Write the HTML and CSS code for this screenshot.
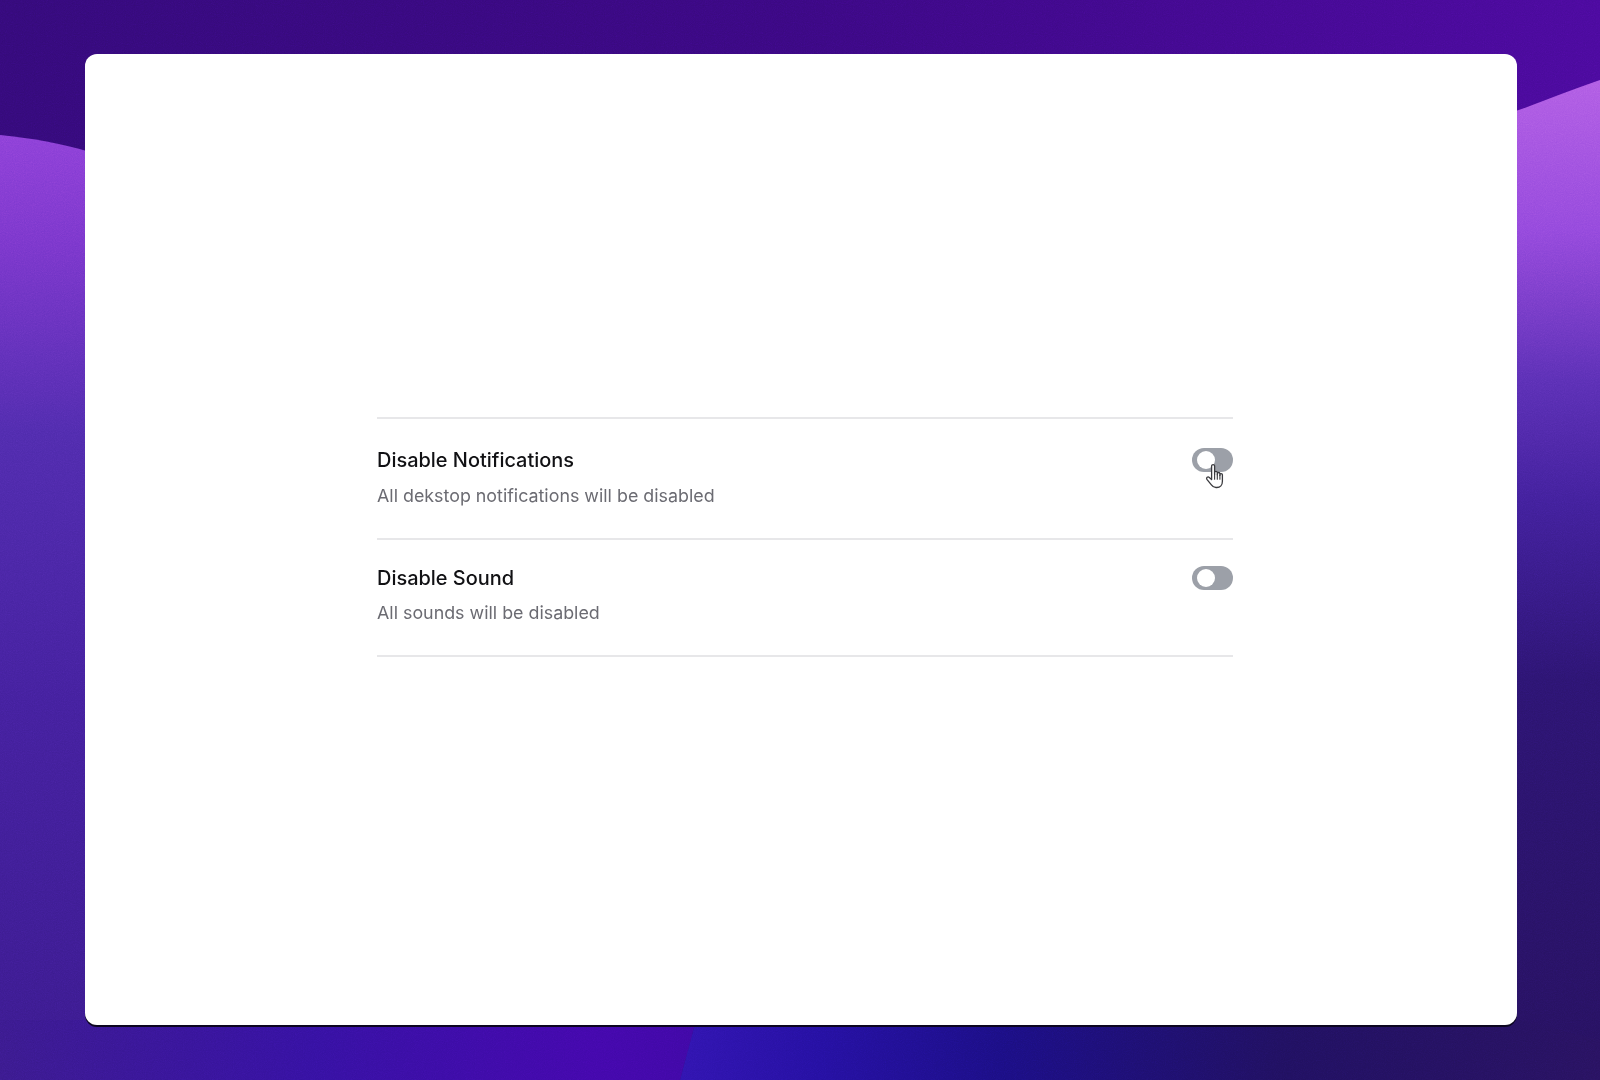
FILE: index.html
```html
<!DOCTYPE html>
<html lang="en">
<head>
    <meta charset="UTF-8">
    <meta name="viewport" content="width=device-width, initial-scale=1.0">
    <title>Notification settings</title>
    <link rel="stylesheet" href="styles.css">
</head>
<body>
    <svg class="wallpaper" viewBox="0 0 1600 1080" preserveAspectRatio="none" aria-hidden="true">
        <defs>
            <linearGradient id="backTop" x1="0" y1="0" x2="1" y2="0">
                <stop offset="0" stop-color="#340a78"/>
                <stop offset="0.5" stop-color="#3a0880"/>
                <stop offset="1" stop-color="#4a0a9c"/>
            </linearGradient>
            <linearGradient id="leftWave" x1="0" y1="130" x2="0" y2="1080" gradientUnits="userSpaceOnUse">
                <stop offset="0" stop-color="#8c40d8"/>
                <stop offset="0.12" stop-color="#7836cb"/>
                <stop offset="0.32" stop-color="#4f2bac"/>
                <stop offset="0.6" stop-color="#43209c"/>
                <stop offset="1" stop-color="#3a1a8c"/>
            </linearGradient>
            <linearGradient id="rightWave" x1="0" y1="80" x2="0" y2="1080" gradientUnits="userSpaceOnUse">
                <stop offset="0" stop-color="#b05ce4"/>
                <stop offset="0.15" stop-color="#9248dc"/>
                <stop offset="0.3" stop-color="#5a2fb4"/>
                <stop offset="0.42" stop-color="#41209a"/>
                <stop offset="0.6" stop-color="#2c1470"/>
                <stop offset="1" stop-color="#26115e"/>
            </linearGradient>
            <linearGradient id="floorLeft" x1="0" y1="0" x2="1" y2="0">
                <stop offset="0" stop-color="#3a1a8c"/>
                <stop offset="0.45" stop-color="#3511a0"/>
                <stop offset="0.85" stop-color="#4208aa"/>
                <stop offset="1" stop-color="#3f08a4"/>
            </linearGradient>
            <linearGradient id="floorRight" x1="680" y1="0" x2="1600" y2="0" gradientUnits="userSpaceOnUse">
                <stop offset="0" stop-color="#3014ae"/>
                <stop offset="0.15" stop-color="#2510a0"/>
                <stop offset="0.35" stop-color="#1b0e82"/>
                <stop offset="0.65" stop-color="#20105f"/>
                <stop offset="1" stop-color="#28125f"/>
            </linearGradient>
            <filter id="grain">
                <feTurbulence type="fractalNoise" baseFrequency="0.9" numOctaves="2" stitchTiles="stitch"/>
                <feColorMatrix type="saturate" values="0"/>
            </filter>
        </defs>
        <rect width="1600" height="1080" fill="url(#backTop)"/>
        <path d="M0 135 C30 138 60 143 90 152 L90 1080 L0 1080 Z" fill="url(#leftWave)"/>
        <path d="M1510 113 C1540 103 1570 90 1600 80 L1600 1080 L1510 1080 Z" fill="url(#rightWave)"/>
        <path d="M80 1020 L696 1020 L680 1080 L0 1080 L0 1020 Z" fill="url(#floorLeft)"/>
        <path d="M696 1020 L1520 1020 L1600 1040 L1600 1080 L680 1080 Z" fill="url(#floorRight)"/>
        <rect class="grain" width="1600" height="1080" filter="url(#grain)"/>
    </svg>

    <main class="card">
        <section class="settings">
            <div class="setting">
                <div class="setting-text">
                    <h2>Disable Notifications</h2>
                    <p>All dekstop notifications will be disabled</p>
                </div>
                <div class="toggle">
                    <span class="knob"></span>
                    <svg class="pointer" viewBox="0 0 20 26" aria-hidden="true">
                        <path d="M6.6 15.6V3.1c0-2 3-2 3 0v8.2V9.6c0-1.7 2.7-1.7 2.7 0v2.2-1.1c0-1.6 2.6-1.6 2.6 0v1.7-.7c0-1.5 2.5-1.5 2.5 0v6.6c0 3.6-2.2 6.2-5.6 6.2H11c-2.400 0-3.500-1-4.600-2.600L1.900 16.400c-1.100-1.700 1-3.300 2.400-2l2.300 2.200z" fill="#fff" stroke="#3a3a3e" stroke-width="1.300" stroke-linejoin="round"/>
                        <path d="M9.600 11.300v5M12.300 11.800v4.500M14.900 12.400v3.900" fill="none" stroke="#3a3a3e" stroke-width="1.100" stroke-linecap="round"/>
                    </svg>
                </div>
            </div>
            <div class="setting">
                <div class="setting-text">
                    <h2>Disable Sound</h2>
                    <p>All sounds will be disabled</p>
                </div>
                <div class="toggle">
                    <span class="knob"></span>
                </div>
            </div>
        </section>
    </main>
</body>
</html>
```

FILE: styles.css
```css
* {
    box-sizing: border-box;
}

html, body {
    height: 100%;
}

body {
    margin: 0;
    padding: 54px 83px 55px 85px;
    font-family: Inter, "Liberation Sans", sans-serif;
    background-color: #3a1a8c;
    overflow: hidden;
}

.wallpaper {
    position: fixed;
    top: 0;
    left: 0;
    width: 100%;
    height: 100%;
    z-index: -1;
}

.grain {
    mix-blend-mode: overlay;
    opacity: 0.25;
}

.card {
    height: 971px;
    background-color: #fff;
    border-radius: 12px;
    box-shadow: 0 2px 0 #0c0620;
    display: flex;
    justify-content: center;
    padding: 363px 0 0 8px;
}

.settings {
    width: 856px;
    height: 240px;
    padding-top: 3px;
    border-top: 2px solid #e7e7e9;
}

.setting {
    display: flex;
    justify-content: space-between;
    align-items: flex-start;
    padding: 24px 0 29px;
    border-bottom: 2px solid #e7e7e9;
}

.setting-text h2 {
    margin: 0;
    font-size: 19.95px;
    font-weight: 500;
    line-height: 28px;
    color: #111114;
}

.setting-text p {
    margin: 8.5px 0 0;
    font-size: 17.85px;
    font-weight: 400;
    line-height: 26px;
    color: #6b6b72;
}

.toggle {
    position: relative;
    display: flex;
    align-items: center;
    width: 41px;
    height: 24px;
    margin-top: 2px;
    padding-left: 5px;
    border-radius: 12px;
    background-color: #9ca0a8;
}

.knob {
    width: 18px;
    height: 18px;
    border-radius: 50%;
    background-color: #fff;
}

.pointer {
    position: absolute;
    left: 13px;
    top: 15px;
    width: 20px;
    height: 26px;
}
```
